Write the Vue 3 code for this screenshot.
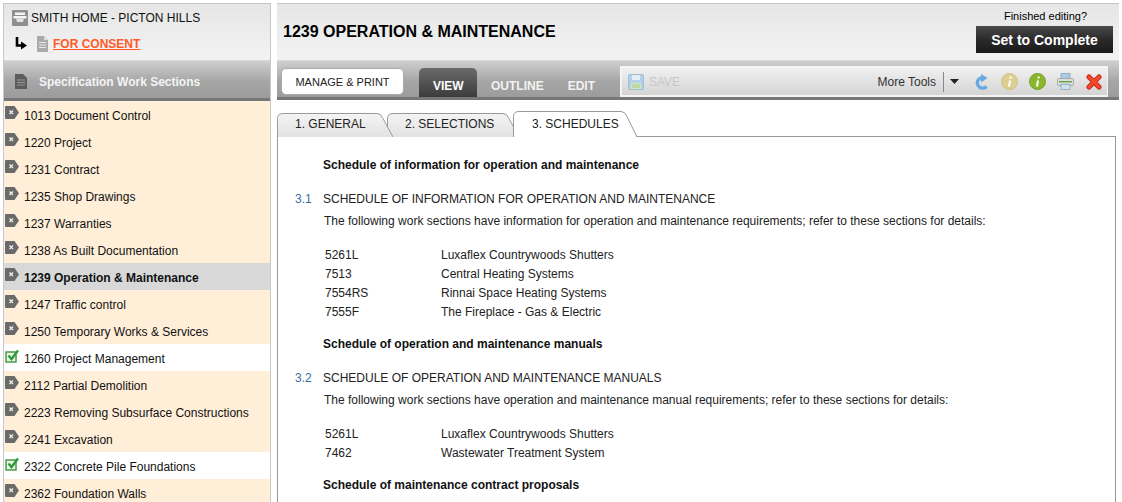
<script setup>
const sections = [
  { name: '1013 Document Control', state: 'open' },
  { name: '1220 Project', state: 'open' },
  { name: '1231 Contract', state: 'open' },
  { name: '1235 Shop Drawings', state: 'open' },
  { name: '1237 Warranties', state: 'open' },
  { name: '1238 As Built Documentation', state: 'open' },
  { name: '1239 Operation & Maintenance', state: 'current' },
  { name: '1247 Traffic control', state: 'open' },
  { name: '1250 Temporary Works & Services', state: 'open' },
  { name: '1260 Project Management', state: 'done' },
  { name: '2112 Partial Demolition', state: 'open' },
  { name: '2223 Removing Subsurface Constructions', state: 'open' },
  { name: '2241 Excavation', state: 'open' },
  { name: '2322 Concrete Pile Foundations', state: 'done' },
  { name: '2362 Foundation Walls', state: 'open' }
];

const tabs = [
  { label: '1. GENERAL', width: 116, active: false, cls: 'first' },
  { label: '2. SELECTIONS', width: 132, active: false, cls: 'second' },
  { label: '3. SCHEDULES', width: 124, active: true, cls: 'on' }
];

function tabPath(w, top) {
  return `M.5 26 V${top + 5} Q.5 ${top} 6 ${top} H${w - 16} Q${w - 12} ${top} ${w - 10} ${top + 5} L${w} 26`;
}

const infoRows = [
  ['5261L', 'Luxaflex Countrywoods Shutters'],
  ['7513', 'Central Heating Systems'],
  ['7554RS', 'Rinnai Space Heating Systems'],
  ['7555F', 'The Fireplace - Gas & Electric']
];
const manualRows = [
  ['5261L', 'Luxaflex Countrywoods Shutters'],
  ['7462', 'Wastewater Treatment System']
];
</script>

<template>
  <div class="page">
    <aside class="sidebar">
      <div class="project">
        <div class="project-name">
          <svg class="project-icon" width="16" height="16" viewBox="0 0 16 16">
            <rect width="16" height="16" rx="1" fill="#8f8f8f" />
            <path d="M3 2.500h10v2.500H3z" fill="#f4f4f4" />
            <path d="M1.500 6h13v2.500h-13z" fill="#f4f4f4" />
            <path d="M4 8.500h8l-1 3.500H5z" fill="#e2e2e2" />
          </svg>
          <span>SMITH HOME - PICTON HILLS</span>
        </div>
        <div class="project-stage">
          <svg width="12" height="13" viewBox="0 0 12 13">
            <path d="M2 0v8.500h5" fill="none" stroke="#000" stroke-width="2.600" />
            <path d="M6 4.500l6 4-6 4z" fill="#000" />
          </svg>
          <svg class="doc-icon" width="11" height="16" viewBox="0 0 11 16">
            <path d="M0 0h7l4 4v12H0z" fill="#aaa" />
            <path d="M7 0v4h4z" fill="#ddd" />
            <path d="M2 6.500h7M2 9h7M2 11.500h7" stroke="#e8e8e8" />
          </svg>
          <a class="stage-link">FOR CONSENT</a>
        </div>
      </div>
      <div class="sidebar-title">
        <svg width="12" height="15" viewBox="0 0 12 15">
          <path d="M0 0h8l4 4v11H0z" fill="#5c5c5c" />
          <path d="M2 6h8M2 8.500h8M2 11h8" stroke="#999" />
        </svg>
        <span>Specification Work Sections</span>
      </div>
      <ul class="section-list">
        <li v-for="s in sections" :key="s.name" class="section" :class="s.state">
          <svg v-if="s.state === 'done'" class="status" width="15" height="14" viewBox="0 0 15 14">
            <rect x="1" y="3" width="10" height="10" fill="#eaf5e6" stroke="#4a9a4a" stroke-width="1.500" />
            <path d="M3.500 6.500l3 3.500L13 1.500" fill="none" stroke="#2f9a3a" stroke-width="2.400" />
          </svg>
          <svg v-else class="status" width="14" height="13" viewBox="0 0 14 13">
            <path d="M1 0h8.500L14 6.500 9.500 13H1a1 1 0 0 1-1-1V1a1 1 0 0 1 1-1z" fill="#6a6a6a" />
            <path d="M4.500 4.500l3.500 3.500M8 4.500L4.500 8" stroke="#eee" stroke-width="1.300" />
          </svg>
          <span>{{ s.name }}</span>
        </li>
      </ul>
    </aside>

    <main class="main">
      <header class="main-head">
        <h1>1239 OPERATION &amp; MAINTENANCE</h1>
        <div class="complete">
          <span>Finished editing?</span>
          <button class="complete-btn">Set to Complete</button>
        </div>
      </header>

      <div class="toolbar">
        <button class="manage-btn">MANAGE &amp; PRINT</button>
        <nav class="modes">
          <a class="mode on">VIEW</a>
          <a class="mode">OUTLINE</a>
          <a class="mode">EDIT</a>
        </nav>
        <div class="tools">
          <svg width="16" height="16" viewBox="0 0 16 16">
            <rect x=".5" y=".5" width="15" height="15" rx="1" fill="#b4d0e8" stroke="#9dbcd6" />
            <rect x="4" y="1" width="8" height="5" fill="#e6eef5" />
            <rect x="3" y="9" width="10" height="6" fill="#d4e6bc" />
            <path d="M4 11h8M4 13h8" stroke="#a9c98a" />
          </svg>
          <span class="save">SAVE</span>
          <span class="more">More Tools</span>
          <svg class="caret" width="9" height="5" viewBox="0 0 9 5"><path d="M0 0h9L4.500 5z" fill="#222" /></svg>
          <svg class="tool first" width="15" height="16" viewBox="0 0 15 16">
            <path d="M11.500 12.500A5.300 5.300 0 1 1 7 3.600" fill="none" stroke="#6aa8e2" stroke-width="3.400" />
            <path d="M6 0l6.500 4L6 8.500z" fill="#6aa8e2" />
          </svg>
          <svg class="tool" width="17" height="17" viewBox="0 0 17 17">
            <circle cx="8.500" cy="8.500" r="8" fill="#dccf94" stroke="#cfc284" />
            <path d="M9.800 3.500l-.4 2M9 7.500L8 13.500" stroke="#fff" stroke-width="2" />
          </svg>
          <svg class="tool" width="17" height="17" viewBox="0 0 17 17">
            <circle cx="8.500" cy="8.500" r="8" fill="#8ab62e" stroke="#7a9f2c" />
            <path d="M9.800 3.500l-.4 2M9 7.500L8 13.500" stroke="#fff" stroke-width="2" />
          </svg>
          <svg class="tool" width="17" height="17" viewBox="0 0 17 17">
            <rect x="4" y=".5" width="9" height="6" fill="#a9cbe6" stroke="#7f9fb8" stroke-width=".7" />
            <rect x=".5" y="5.500" width="16" height="7" rx="1" fill="#dcdcdc" stroke="#999" stroke-width=".7" />
            <rect x="2" y="8" width="13" height="1.500" fill="#6aa84f" />
            <rect x="4" y="11.500" width="9" height="5" fill="#cfe2f2" stroke="#7f9fb8" stroke-width=".7" />
          </svg>
          <svg class="tool last" width="16" height="16" viewBox="0 0 16 16">
            <path d="M3 3l10 10M13 3L3 13" stroke="#b8200f" stroke-width="5" stroke-linecap="round" />
            <path d="M3 3l10 10M13 3L3 13" stroke="#f4482c" stroke-width="3.400" stroke-linecap="round" />
          </svg>
        </div>
      </div>

      <div class="tabs">
        <div v-for="t in tabs" :key="t.label" class="tab" :class="t.cls" :style="{ width: t.width + 'px' }">
          <svg class="tab-shape" :width="t.width" height="26" :viewBox="`0 0 ${t.width} 26`">
            <defs>
              <linearGradient id="tabFill" x1="0" y1="0" x2="0" y2="1">
                <stop offset="0" stop-color="#f4f4f4" />
                <stop offset="1" stop-color="#e2e2e2" />
              </linearGradient>
            </defs>
            <path :d="tabPath(t.width, t.active ? 0.5 : 2.5) + ' Z'" :fill="t.active ? '#fff' : 'url(#tabFill)'" stroke="none" />
            <path :d="tabPath(t.width, t.active ? 0.5 : 2.5)" fill="none" stroke="#999" />
          </svg>
          <span>{{ t.label }}</span>
        </div>
      </div>

      <section class="sheet">
        <h3>Schedule of information for operation and maintenance</h3>
        <div class="clause"><span class="num">3.1</span><span>SCHEDULE OF INFORMATION FOR OPERATION AND MAINTENANCE</span></div>
        <p>The following work sections have information for operation and maintenance requirements; refer to these sections for details:</p>
        <div class="refs">
          <div v-for="r in infoRows" :key="r[0]" class="ref"><span>{{ r[0] }}</span><span>{{ r[1] }}</span></div>
        </div>
        <h3>Schedule of operation and maintenance manuals</h3>
        <div class="clause"><span class="num">3.2</span><span>SCHEDULE OF OPERATION AND MAINTENANCE MANUALS</span></div>
        <p>The following work sections have operation and maintenance manual requirements; refer to these sections for details:</p>
        <div class="refs">
          <div v-for="r in manualRows" :key="r[0]" class="ref"><span>{{ r[0] }}</span><span>{{ r[1] }}</span></div>
        </div>
        <h3>Schedule of maintenance contract proposals</h3>
      </section>
    </main>
  </div>
</template>

<style>
html, body {
  margin: 0;
  background: #fff;
  overflow: hidden;
}
</style>

<style scoped>
.page {
  display: flex;
  gap: 6px;
  height: 502px;
  padding: 3px 3px 0 3px;
  box-sizing: border-box;
  overflow: hidden;
  font-family: "Liberation Sans", Arial, sans-serif;
  font-size: 12px;
  color: #111;
}

.sidebar {
  width: 268px;
  flex: none;
  box-sizing: border-box;
  border-left: 1px solid #c8c8c8;
  border-right: 1px solid #c8c8c8;
}

.project {
  height: 57px;
  box-sizing: border-box;
  border-top: 1px solid #c4c4c4;
  background: linear-gradient(#e6e6e6, #f3f3f3);
  padding: 5px 0 0 8px;
}

.project-name {
  display: flex;
  align-items: center;
  gap: 3px;
  height: 17px;
}

.project-stage {
  display: flex;
  align-items: center;
  margin: 10px 0 0 3px;
  height: 15px;
}

.doc-icon {
  margin-left: 10px;
}

.stage-link {
  margin-left: 5px;
  color: #ff5a28;
  font-weight: bold;
  text-decoration: underline;
}

.sidebar-title {
  height: 41px;
  box-sizing: border-box;
  border-top: 1px solid #d8d8d8;
  border-bottom: 3px solid #777;
  background: linear-gradient(#cfcfcf, #a6a6a6 55%, #9c9c9c);
  display: flex;
  align-items: center;
  padding: 4px 0 0 11px;
  gap: 12px;
  color: #f4f4f4;
  font-weight: bold;
}

.section-list {
  list-style: none;
  margin: 0;
  padding: 0;
}

.section {
  position: relative;
  height: 27px;
  line-height: 31px;
  padding-left: 20px;
  background: #ffeed8;
  color: #111;
}

.section.current {
  background: #d8d8d8;
  font-weight: bold;
}

.section.done {
  background: #fff;
}

.status {
  position: absolute;
  left: 1px;
  top: 5px;
}

.main {
  flex: 1;
  min-width: 0;
}

.main-head {
  height: 57px;
  box-sizing: border-box;
  border-top: 1px solid #c4c4c4;
  background: linear-gradient(#e6e6e6, #f3f3f3);
  display: flex;
  justify-content: space-between;
  padding: 0 6px 0 6px;
}

.main-head h1 {
  margin: 18px 0 0;
  font-size: 16px;
  line-height: 19px;
  color: #000;
}

.complete {
  width: 137px;
  text-align: center;
  font-size: 11px;
  padding-top: 5px;
  color: #000;
}

.complete span {
  display: block;
  height: 17px;
  line-height: 14px;
  padding-left: 2px;
}

.complete-btn {
  display: block;
  width: 137px;
  height: 27px;
  padding: 0;
  border: 0;
  background: linear-gradient(#4a4a4a, #2a2a2a 50%, #1a1a1a);
  color: #fff;
  font: bold 14px "Liberation Sans", Arial, sans-serif;
}

.toolbar {
  height: 40px;
  box-sizing: border-box;
  border-top: 1px solid #d8d8d8;
  border-bottom: 3px solid #777;
  background: linear-gradient(#cfcfcf, #a6a6a6 55%, #9c9c9c);
  display: flex;
  padding: 7px 11px 0 4px;
}

.manage-btn {
  width: 123px;
  height: 27px;
  box-sizing: border-box;
  border: 1px solid #aaa;
  border-radius: 5px;
  background: #fff;
  color: #222;
  font: 11px "Liberation Sans", Arial, sans-serif;
  padding: 0;
}

.modes {
  display: flex;
  margin-left: 15px;
  height: 29px;
  align-items: stretch;
}

.mode {
  padding: 8px 14px 0;
  color: #f2f2f2;
  font-weight: bold;
  box-sizing: border-box;
  line-height: 20px;
}

.mode.on {
  background: linear-gradient(#6a6a6a, #3c3c3c);
  border-radius: 5px 5px 0 0;
  color: #fff;
  width: 58px;
  padding: 8px 0 0 14px;
}

.mode:last-child {
  margin-left: -4px;
}

.tools {
  margin-left: auto;
  width: 488px;
  height: 31px;
  margin-top: -2px;
  box-sizing: border-box;
  border: 2px solid #f4f4f4;
  border-right-width: 1px;
  background: linear-gradient(#f0f0f0, #d4d4d4);
  display: flex;
  align-items: center;
  padding: 0 5px 0 6px;
}

.save {
  margin-left: 5px;
  color: #c8c8c8;
}

.more {
  margin-left: auto;
  color: #333;
  padding-right: 7px;
  border-right: 1px solid #888;
  line-height: 20px;
}

.caret {
  margin-left: 6px;
}

.tool {
  margin-left: 11px;
}

.tool.first {
  margin-left: 16px;
}

.tool.last {
  margin-left: 12px;
}

.tabs {
  display: flex;
  margin-top: 10px;
  height: 27px;
  position: relative;
}

.tab {
  position: relative;
  flex: none;
  height: 26px;
  margin-right: -6px;
  margin-top: 1px;
  line-height: 26px;
  font-size: 12px;
  text-align: left;
  color: #222;
}

.tab.first {
  z-index: 1;
}

.tab.on {
  z-index: 2;
}

.tab span {
  position: relative;
  padding-left: 18px;
}

.tab.on span {
  padding-left: 19px;
}

.tab-shape {
  position: absolute;
  left: 0;
  top: 0;
}

.sheet {
  margin-right: 3px;
  margin-top: -1px;
  border: 1px solid #999;
  border-bottom: 0;
  padding: 15px 0 0 17px;
  height: 400px;
  box-sizing: border-box;
  background: #fff;
  color: #222;
}

.sheet h3 {
  margin: 0 0 0 28px;
  font-size: 12px;
  line-height: 27px;
  height: 27px;
  color: #111;
}

.clause {
  display: flex;
  margin-top: 10px;
  line-height: 20px;
  color: #222;
}

.num {
  width: 28px;
  color: #3b6ea5;
}

.sheet p {
  margin: 2px 0 0 29px;
  line-height: 20px;
}

.refs {
  margin: 15px 0 9px 30px;
}

.ref {
  display: flex;
  height: 19px;
  line-height: 19px;
}

.ref span:first-child {
  width: 116px;
}
</style>
